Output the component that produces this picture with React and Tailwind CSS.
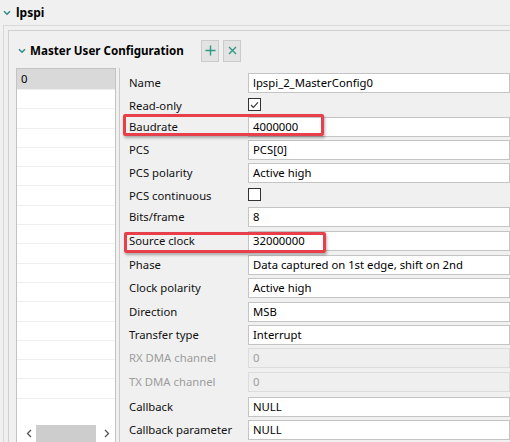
import { Fragment } from "react";

const rows = [
  { label: "Name", value: "lpspi_2_MasterConfig0", h: "h-[23px]" },
  { label: "Read-only", check: true, checked: true, h: "h-[21px]" },
  { label: "Baudrate", value: "4000000", h: "h-[23px]" },
  { label: "PCS", value: "PCS[0]", h: "h-[23px]" },
  { label: "PCS polarity", value: "Active high", h: "h-[23px]" },
  { label: "PCS continuous", check: true, checked: false, h: "h-[21px]" },
  { label: "Bits/frame", value: "8", h: "h-[24px]" },
  { label: "Source clock", value: "32000000", h: "h-[24px]" },
  { label: "Phase", value: "Data captured on 1st edge, shift on 2nd", h: "h-[23px]" },
  { label: "Clock polarity", value: "Active high", h: "h-[24px]" },
  { label: "Direction", value: "MSB", h: "h-[23px]" },
  { label: "Transfer type", value: "Interrupt", h: "h-[23px]" },
  { label: "RX DMA channel", value: "0", disabled: true, h: "h-[24px]" },
  { label: "TX DMA channel", value: "0", disabled: true, h: "h-[25px]" },
  { label: "Callback", value: "NULL", h: "h-[23px]" },
  { label: "Callback parameter", value: "NULL", h: "h-[23px]" },
];

function Chevron() {
  return (
    <svg width="8" height="6" viewBox="0 0 8 6" className="shrink-0">
      <path d="M1 1.2 L4 4.2 L7 1.2" fill="none" stroke="#2f8f8c" strokeWidth="1.6" />
    </svg>
  );
}

function ToolButton({ children }) {
  return (
    <button className="flex h-[22px] w-[18px] items-center justify-center border border-[#cbcbcb] bg-[#e3e3e3]">
      {children}
    </button>
  );
}

function CheckBox({ checked }) {
  return (
    <div className="mt-[2px] flex h-[13px] w-[13px] items-center justify-center border border-[#333333] bg-white">
      {checked && (
        <svg width="9" height="8" viewBox="0 0 9 8">
          <path d="M1 4 L3.4 6.4 L8 1.4" fill="none" stroke="#333" strokeWidth="1.1" />
        </svg>
      )}
    </div>
  );
}

function PropertyRow({ row }) {
  return (
    <div className={`flex items-start ${row.h}`}>
      <div
        className={`flex h-[20px] w-[119px] shrink-0 items-center whitespace-nowrap ${
          row.disabled ? "text-[#9d9d9d]" : "text-[#111]"
        }`}
      >
        {row.label}
      </div>
      {row.check ? (
        <CheckBox checked={row.checked} />
      ) : (
        <div
          className={`flex h-[20px] flex-1 items-center whitespace-nowrap border pl-[4px] ${
            row.disabled
              ? "border-[#dcdcdc] bg-[#efefef] text-[#9d9d9d]"
              : "border-[#c4c4c4] bg-white text-black"
          }`}
        >
          {row.value}
        </div>
      )}
    </div>
  );
}

export default function App() {
  return (
    <div className="h-[442px] w-[510px] overflow-hidden bg-[#f0f0f0] font-['Noto_Sans',sans-serif] text-[11.3px] leading-none text-black">
      <div className="flex h-[25px] items-center gap-[5px] pl-[3px]">
        <Chevron />
        <span className="text-[12px] font-bold">lpspi</span>
      </div>

      <div className="ml-[3px] h-[417px] border-l border-t border-[#d8d8d8] pl-[4px] pt-[4px]">
        <div className="flex h-full flex-col border-l border-t border-[#cfcfcf] pl-[7px]">
          <div className="flex h-[37px] shrink-0 items-center pt-[2px]">
            <div className="flex w-[185px] items-center gap-[4px] whitespace-nowrap pl-[2px]">
              <Chevron />
              <span className="text-[11.6px] font-bold">Master User Configuration</span>
            </div>
            <div className="flex gap-[4px]">
              <ToolButton>
                <svg width="11" height="11" viewBox="0 0 11 11">
                  <path d="M5.5 0.5 V10.5 M0.5 5.5 H10.5" stroke="#2f9a82" strokeWidth="1.4" />
                </svg>
              </ToolButton>
              <ToolButton>
                <svg width="9" height="9" viewBox="0 0 9 9">
                  <path d="M1 1 L8 8 M8 1 L1 8" stroke="#2f9a82" strokeWidth="1.4" />
                </svg>
              </ToolButton>
            </div>
          </div>

          <div className="flex min-h-0 flex-1">
            {/* config list */}
            <div className="flex w-[100px] shrink-0 flex-col border border-b-0 border-[#c3c3c3] bg-white">
              <div className="flex h-[20px] items-center bg-[#d9d9d9] pl-[4px]">0</div>
              <div className="flex-1 overflow-hidden">
                {Array.from({ length: 17 }).map((_, i) => (
                  <div key={i} className="h-[19.3px] border-t border-[#efefef]" />
                ))}
              </div>
              <div className="flex h-[17px] shrink-0 items-center bg-white pl-[9px] text-[#555]">
                <svg width="6" height="9" viewBox="0 0 6 9">
                  <path d="M5 1 L1.5 4.5 L5 8" fill="none" stroke="#555" strokeWidth="1.3" />
                </svg>
                <div className="ml-[4px] mr-[8px] h-full w-[60px] bg-[#cdcdcd]" />
                <svg width="6" height="9" viewBox="0 0 6 9">
                  <path d="M1 1 L4.5 4.5 L1 8" fill="none" stroke="#555" strokeWidth="1.3" />
                </svg>
              </div>
            </div>

            <div className="ml-[3px] w-[1px] shrink-0 bg-[#cacaca]" />

            {/* property sheet */}
            <div className="relative flex-1 pl-[9px] pt-[5px]">
              {rows.map((row) => (
                <Fragment key={row.label}>
                  <PropertyRow row={row} />
                </Fragment>
              ))}
              <div className="absolute left-[3px] top-[46px] h-[22px] w-[201px] rounded-[2px] border-[3px] border-[#e8404a] shadow-[1px_2px_3px_rgba(0,0,0,0.3)]" />
              <div className="absolute left-[4px] top-[164px] h-[21px] w-[202px] rounded-[2px] border-[3px] border-[#e8404a] shadow-[1px_2px_3px_rgba(0,0,0,0.3)]" />
            </div>
          </div>
        </div>
      </div>
    </div>
  );
}
